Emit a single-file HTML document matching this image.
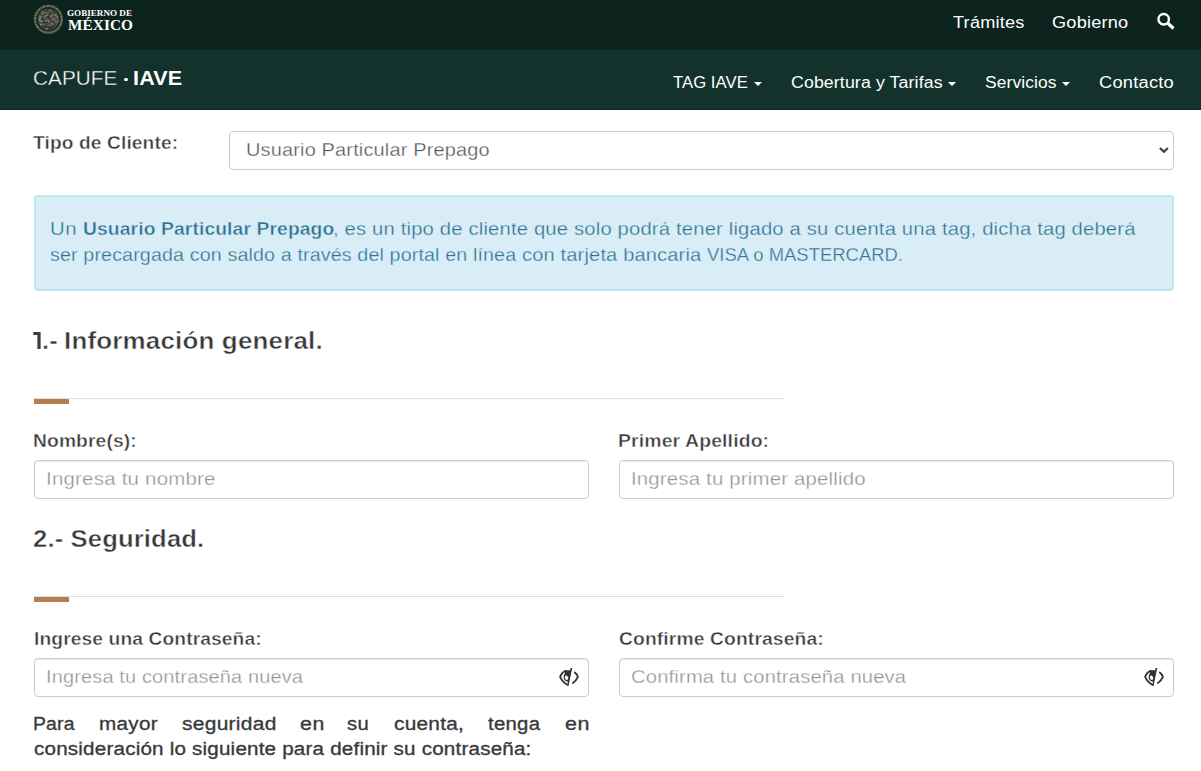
<!doctype html>
<html lang="es"><head><meta charset="utf-8"><title>CAPUFE IAVE</title>
<style>
html,body{margin:0;padding:0;}
body{width:1201px;height:771px;position:relative;overflow:hidden;background:#fff;font-family:"Liberation Sans",sans-serif;}
.t{position:absolute;white-space:nowrap;line-height:1;transform-origin:0 0;display:block;}
.t b{font-weight:700;}

.abs{position:absolute;display:block;}
#topbar{left:0;top:0;width:1201px;height:50px;background:#0c231e;}
#navbar{left:0;top:50px;width:1201px;height:59px;background:#13322b;border-bottom:1px solid #0a2721;}
.caret{width:0;height:0;border-left:4px solid transparent;border-right:4px solid transparent;border-top:4px solid #fff;}
.fc{box-sizing:border-box;height:39px;background:#fff;border:1px solid #ccc;border-radius:4px;box-shadow:inset 0 1px 1px rgba(0,0,0,.075);}
#alert{box-sizing:border-box;left:34px;top:195px;width:1140px;height:96px;background:#d9edf7;border:2px solid #bce8f1;border-radius:4px;}
.hr{left:34px;width:750px;height:1px;background:#dce0e0;}
.bar{left:34px;width:35px;height:5px;background:#b57e50;}
</style></head>
<body>
<div id="topbar" class="abs"></div>
<div id="navbar" class="abs"></div>
<!-- emblem -->
<svg class="abs" style="left:33px;top:4px" width="31" height="31" viewBox="-15.4 -15.3 31 31">
  <circle r="13.3" fill="none" stroke="#7f7865" stroke-width="2.4" stroke-dasharray="2.1 0.45 1.3 0.4 2.6 0.5 1.6 0.45" opacity=".92"/>
  <circle r="10.9" fill="#474d44"/>
  <rect x="-8.2" y="1.6" width="2.5" height="1.2" fill="#90876f" opacity="0.75"/>
  <rect x="-4.5" y="-2.9" width="1.8" height="1.4" fill="#90876f" opacity="0.87"/>
  <rect x="4.0" y="2.2" width="1.1" height="1.5" fill="#90876f" opacity="0.83"/>
  <rect x="8.1" y="1.8" width="2.5" height="1.4" fill="#90876f" opacity="0.80"/>
  <rect x="-0.2" y="0.6" width="1.8" height="0.9" fill="#90876f" opacity="0.63"/>
  <rect x="-0.8" y="1.1" width="1.7" height="1.2" fill="#90876f" opacity="0.89"/>
  <rect x="-8.7" y="-1.6" width="1.7" height="1.4" fill="#90876f" opacity="0.73"/>
  <rect x="-3.0" y="8.9" width="2.6" height="1.6" fill="#90876f" opacity="0.83"/>
  <rect x="-2.6" y="3.9" width="1.4" height="0.9" fill="#90876f" opacity="0.86"/>
  <rect x="-8.1" y="4.5" width="1.6" height="1.7" fill="#90876f" opacity="0.89"/>
  <rect x="3.3" y="-0.6" width="2.4" height="1.2" fill="#90876f" opacity="0.94"/>
  <rect x="-3.1" y="0.8" width="2.0" height="1.5" fill="#90876f" opacity="0.66"/>
  <rect x="3.6" y="2.2" width="2.5" height="1.5" fill="#90876f" opacity="0.60"/>
  <rect x="-0.4" y="2.4" width="1.0" height="1.5" fill="#90876f" opacity="0.62"/>
  <rect x="-6.7" y="-3.1" width="1.2" height="1.5" fill="#90876f" opacity="0.60"/>
  <rect x="-2.9" y="-3.1" width="1.6" height="1.0" fill="#90876f" opacity="0.66"/>
  <rect x="7.9" y="-2.4" width="1.4" height="1.6" fill="#90876f" opacity="0.63"/>
  <rect x="-8.1" y="5.1" width="2.0" height="0.9" fill="#90876f" opacity="0.95"/>
  <rect x="0.0" y="4.3" width="2.2" height="1.1" fill="#90876f" opacity="0.67"/>
  <rect x="1.7" y="0.8" width="1.9" height="1.0" fill="#90876f" opacity="0.79"/>
  <rect x="-5.8" y="4.1" width="2.5" height="1.2" fill="#90876f" opacity="0.78"/>
  <rect x="2.2" y="-3.9" width="1.2" height="1.6" fill="#90876f" opacity="0.88"/>
  <rect x="-1.1" y="3.4" width="2.2" height="1.6" fill="#90876f" opacity="0.63"/>
  <rect x="7.8" y="-3.4" width="1.9" height="1.2" fill="#90876f" opacity="0.59"/>
  <rect x="8.7" y="1.6" width="1.3" height="1.4" fill="#90876f" opacity="0.65"/>
  <rect x="2.7" y="-7.3" width="1.4" height="1.0" fill="#90876f" opacity="0.84"/>
  <rect x="3.3" y="1.2" width="1.9" height="1.6" fill="#90876f" opacity="0.80"/>
  <rect x="-2.4" y="8.8" width="1.2" height="0.8" fill="#90876f" opacity="0.66"/>
  <rect x="-2.9" y="0.2" width="1.2" height="1.1" fill="#90876f" opacity="0.78"/>
  <rect x="2.8" y="3.5" width="2.4" height="1.7" fill="#90876f" opacity="0.81"/>
  <rect x="-3.3" y="-7.4" width="1.1" height="0.8" fill="#90876f" opacity="0.56"/>
  <rect x="5.7" y="-4.8" width="2.5" height="0.8" fill="#90876f" opacity="0.80"/>
  <rect x="-9.0" y="0.1" width="1.4" height="1.7" fill="#90876f" opacity="0.58"/>
  <rect x="-9.3" y="-3.1" width="2.4" height="1.5" fill="#90876f" opacity="0.83"/>
  <rect x="1.8" y="-9.7" width="1.5" height="1.4" fill="#90876f" opacity="0.91"/>
  <rect x="3.2" y="-5.4" width="2.2" height="1.6" fill="#90876f" opacity="0.78"/>
  <rect x="-5.2" y="-5.0" width="1.9" height="1.3" fill="#90876f" opacity="0.58"/>
  <rect x="-7.5" y="-8.2" width="2.4" height="1.5" fill="#90876f" opacity="0.71"/>
  <rect x="-1.5" y="-8.2" width="1.6" height="1.6" fill="#90876f" opacity="0.58"/>
  <rect x="-1.0" y="-2.3" width="1.9" height="1.2" fill="#90876f" opacity="0.64"/>
  <rect x="-3.2" y="-7.4" width="1.9" height="1.6" fill="#90876f" opacity="0.65"/>
  <rect x="4.3" y="-0.1" width="2.1" height="1.0" fill="#90876f" opacity="0.62"/>
  <rect x="5.8" y="-5.2" width="1.7" height="1.6" fill="#90876f" opacity="0.68"/>
  <rect x="-3.0" y="-4.5" width="1.6" height="1.5" fill="#90876f" opacity="0.92"/>
  <rect x="3.5" y="-4.7" width="1.9" height="1.1" fill="#90876f" opacity="0.60"/>
  <rect x="-10.1" y="-0.5" width="2.3" height="1.4" fill="#90876f" opacity="0.93"/>
  <rect x="-1.5" y="3.4" width="1.7" height="1.0" fill="#90876f" opacity="0.64"/>
  <rect x="-7.5" y="3.4" width="1.7" height="1.1" fill="#90876f" opacity="0.89"/>
  <rect x="6.0" y="-1.2" width="1.0" height="0.8" fill="#90876f" opacity="0.90"/>
  <rect x="7.0" y="1.6" width="1.9" height="1.1" fill="#90876f" opacity="0.87"/>
  <rect x="2.7" y="0.0" width="1.7" height="0.8" fill="#90876f" opacity="0.88"/>
  <rect x="-0.2" y="3.0" width="1.0" height="1.4" fill="#90876f" opacity="0.73"/>
  <rect x="-6.6" y="-6.6" width="2.3" height="1.7" fill="#90876f" opacity="0.82"/>
  <rect x="1.5" y="6.0" width="1.2" height="0.8" fill="#90876f" opacity="0.74"/>
  <rect x="-1.6" y="-4.6" width="1.4" height="1.1" fill="#90876f" opacity="0.83"/>
  <rect x="-8.7" y="-1.6" width="2.2" height="1.2" fill="#90876f" opacity="0.87"/>
  <rect x="1.2" y="-2.3" width="2.5" height="1.5" fill="#90876f" opacity="0.60"/>
  <rect x="-8.6" y="1.7" width="2.4" height="1.1" fill="#90876f" opacity="0.78"/>
  <rect x="5.4" y="-6.5" width="1.9" height="1.0" fill="#1d302a" opacity="0.83"/>
  <rect x="1.4" y="7.5" width="1.8" height="1.1" fill="#1d302a" opacity="0.85"/>
  <rect x="1.1" y="8.4" width="2.0" height="1.3" fill="#1d302a" opacity="0.79"/>
  <rect x="0.5" y="-6.0" width="1.9" height="1.2" fill="#1d302a" opacity="0.72"/>
  <rect x="4.9" y="2.7" width="1.5" height="1.2" fill="#1d302a" opacity="0.77"/>
  <rect x="8.2" y="1.0" width="0.9" height="1.2" fill="#1d302a" opacity="0.66"/>
  <rect x="-4.9" y="7.1" width="1.0" height="0.8" fill="#1d302a" opacity="0.78"/>
  <rect x="-2.3" y="-9.5" width="1.6" height="1.3" fill="#1d302a" opacity="0.77"/>
  <rect x="2.2" y="-1.4" width="1.1" height="1.0" fill="#1d302a" opacity="0.70"/>
  <rect x="-1.8" y="-8.4" width="1.4" height="1.2" fill="#1d302a" opacity="0.80"/>
  <rect x="-3.2" y="5.0" width="1.8" height="1.2" fill="#1d302a" opacity="0.67"/>
  <rect x="5.0" y="-8.3" width="1.4" height="1.0" fill="#1d302a" opacity="0.67"/>
  <rect x="-7.5" y="-1.9" width="1.5" height="0.7" fill="#1d302a" opacity="0.94"/>
  <rect x="-7.1" y="-1.1" width="1.8" height="1.0" fill="#1d302a" opacity="0.77"/>
  <rect x="-1.6" y="-2.8" width="1.4" height="0.9" fill="#1d302a" opacity="0.93"/>
  <rect x="3.8" y="-2.7" width="1.4" height="0.8" fill="#1d302a" opacity="0.75"/>
  <rect x="3.0" y="-9.0" width="1.4" height="0.9" fill="#1d302a" opacity="0.67"/>
  <rect x="-7.4" y="-6.9" width="1.0" height="1.2" fill="#1d302a" opacity="0.61"/>
  <rect x="0.8" y="3.9" width="1.6" height="0.9" fill="#1d302a" opacity="0.72"/>
  <rect x="-3.2" y="-2.6" width="1.7" height="0.8" fill="#1d302a" opacity="0.78"/>
  <rect x="-0.7" y="3.9" width="1.4" height="1.0" fill="#1d302a" opacity="0.73"/>
  <rect x="-6.6" y="3.3" width="1.0" height="0.8" fill="#1d302a" opacity="0.82"/>
  <path d="M-0.8 -3.2 L5.6 3.8" stroke="#15271f" stroke-width="1.1"/>
  <path d="M-6.6 3.6 L0.2 3.6" stroke="#15271f" stroke-width="1"/>
  <path d="M-6.2 -3.2 L-2.4 -6.4 M2 -7 L5.5 -4.2 M-7.5 0.5 L-4.2 -1" stroke="#15271f" stroke-width=".8"/>
  <path d="M-6.8 6.4 Q0 10.4 6.8 6.4" fill="none" stroke="#15271f" stroke-width=".8"/>
  <circle r="11.3" fill="none" stroke="#13261f" stroke-width=".9"/>
</svg>
<!-- search -->
<svg class="abs" style="left:1155px;top:11px" width="22" height="20" viewBox="0 0 22 20">
  <circle cx="8.7" cy="8.2" r="5.25" fill="none" stroke="#fff" stroke-width="2.4"/>
  <path d="M12.6 12.0 L18.5 17.5" stroke="#fff" stroke-width="3.2" stroke-linecap="butt"/>
</svg>
<span class="abs" style="left:124.2px;top:77.9px;width:3.4px;height:3.4px;border-radius:50%;background:#fff"></span>
<span class="abs caret" style="left:753.9px;top:82px"></span>
<span class="abs caret" style="left:948.3px;top:82px"></span>
<span class="abs caret" style="left:1062.3px;top:82px"></span>
<!-- select -->
<div class="abs fc" style="left:229px;top:131px;width:945px;box-shadow:none"></div>
<svg class="abs" style="left:1158px;top:145px" width="13" height="10" viewBox="0 0 13 10">
  <path d="M1.9 2.9 L5.9 6.8 L9.9 2.9" fill="none" stroke="#36403e" stroke-width="2.1"/>
</svg>
<div id="alert" class="abs"></div>
<svg class="abs" style="left:32px;top:330px" width="12" height="21" viewBox="0 0 12 21"><path d="M1.3 2.1 L8.6 2.1 L8.6 19 L5.4 19 L5.4 4.9 L1.3 4.9 Z" fill="#3c3c3d"/></svg>
<div class="abs hr" style="top:398px"></div><div class="abs bar" style="top:399px"></div>
<div class="abs hr" style="top:596px"></div><div class="abs bar" style="top:597px"></div>
<div class="abs fc" style="left:34px;top:460px;width:555px"></div>
<div class="abs fc" style="left:619px;top:460px;width:555px"></div>
<div class="abs fc" style="left:34px;top:658px;width:555px"></div>
<div class="abs fc" style="left:619px;top:658px;width:555px"></div>
<!-- eye icons -->
<svg class="abs eye" style="left:558px;top:667px" width="23" height="20" viewBox="0 0 23 20">
  <path d="M8.3 3.7 C5.4 4.7 3.2 7 2.1 9.8 C3.6 13.2 6.2 16.2 9.8 18" fill="none" stroke="#333" stroke-width="1.8"/>
  <path d="M6.8 3.2 L12.3 3.2 L12.5 1 L14.3 1 L10.6 18.9 L9.2 18.7 L9.9 14.4 C7.6 14.7 5.7 12.8 5.6 10.2 C5.55 8.8 6 7.6 6.8 6.8 Z" fill="#333"/>
  <ellipse cx="8.5" cy="10.8" rx="1.55" ry="2.3" transform="rotate(-18 8.5 10.8)" fill="#fff"/>
  <path d="M15.3 0.6 L11.4 19.4" stroke="#fff" stroke-width="1.3"/>
  <path d="M16.3 5.1 C18 6.3 19.2 7.9 19.9 9.8 C18.8 12.4 16.8 14.9 14.3 16.5" fill="none" stroke="#333" stroke-width="1.8"/>
</svg>
<svg class="abs eye" style="left:1143px;top:667px" width="23" height="20" viewBox="0 0 23 20">
  <path d="M8.3 3.7 C5.4 4.7 3.2 7 2.1 9.8 C3.6 13.2 6.2 16.2 9.8 18" fill="none" stroke="#333" stroke-width="1.8"/>
  <path d="M6.8 3.2 L12.3 3.2 L12.5 1 L14.3 1 L10.6 18.9 L9.2 18.7 L9.9 14.4 C7.6 14.7 5.7 12.8 5.6 10.2 C5.55 8.8 6 7.6 6.8 6.8 Z" fill="#333"/>
  <ellipse cx="8.5" cy="10.8" rx="1.55" ry="2.3" transform="rotate(-18 8.5 10.8)" fill="#fff"/>
  <path d="M15.3 0.6 L11.4 19.4" stroke="#fff" stroke-width="1.3"/>
  <path d="M16.3 5.1 C18 6.3 19.2 7.9 19.9 9.8 C18.8 12.4 16.8 14.9 14.3 16.5" fill="none" stroke="#333" stroke-width="1.8"/>
</svg>


<span class="t" style="left:67.39px;top:8.00px;font-size:8.9px;font-weight:700;color:#ffffff;font-family:'Liberation Serif',serif;transform:translateY(0.50px) scaleX(1.0218);letter-spacing:0.023px;">GOBIERNO DE</span>
<span class="t" style="left:67.90px;top:17.00px;font-size:14.6px;font-weight:700;color:#ffffff;font-family:'Liberation Serif',serif;transform:translateY(0.50px) scaleX(1.0460);letter-spacing:0.095px;">M&Eacute;XICO</span>
<span class="t" style="left:952.73px;top:15.00px;font-size:16px;font-weight:400;color:#ffffff;font-family:'Liberation Sans',sans-serif;transform:translateY(0.00px) scaleX(1.1349);letter-spacing:0.181px;">Tr&aacute;mites</span>
<span class="t" style="left:1052.17px;top:15.00px;font-size:16px;font-weight:400;color:#ffffff;font-family:'Liberation Sans',sans-serif;transform:translateY(0.00px) scaleX(1.1341);letter-spacing:0.191px;">Gobierno</span>
<span class="t" style="left:33.27px;top:68.00px;font-size:20px;font-weight:400;color:#ffffff;font-family:'Liberation Sans',sans-serif;transform:translateY(0.00px) scaleX(1.0342);-webkit-text-stroke:0.35px #13322b;letter-spacing:0.093px;">CAPUFE</span>
<span class="t" style="left:132.99px;top:68.00px;font-size:20px;font-weight:700;color:#ffffff;font-family:'Liberation Sans',sans-serif;transform:translateY(0.00px) scaleX(1.0751);letter-spacing:0.177px;">IAVE</span>
<span class="t" style="left:673.08px;top:75.00px;font-size:16px;font-weight:400;color:#ffffff;font-family:'Liberation Sans',sans-serif;transform:translateY(0.00px) scaleX(1.0398);letter-spacing:0.068px;">TAG IAVE</span>
<span class="t" style="left:790.89px;top:75.00px;font-size:16px;font-weight:400;color:#ffffff;font-family:'Liberation Sans',sans-serif;transform:translateY(0.00px) scaleX(1.1051);letter-spacing:0.124px;">Cobertura y Tarifas</span>
<span class="t" style="left:985.11px;top:75.00px;font-size:16px;font-weight:400;color:#ffffff;font-family:'Liberation Sans',sans-serif;transform:translateY(0.00px) scaleX(1.0870);letter-spacing:0.112px;">Servicios</span>
<span class="t" style="left:1099.46px;top:75.00px;font-size:16px;font-weight:400;color:#ffffff;font-family:'Liberation Sans',sans-serif;transform:translateY(0.00px) scaleX(1.1428);letter-spacing:0.197px;">Contacto</span>
<span class="t" style="left:33.30px;top:134.00px;font-size:18px;font-weight:700;color:#39393a;font-family:'Liberation Sans',sans-serif;transform:translateY(0.00px) scaleX(1.0658);-webkit-text-stroke:0.4px #ffffff;letter-spacing:0.097px;">Tipo de Cliente:</span>
<span class="t" style="left:245.54px;top:141.00px;font-size:18px;font-weight:400;color:#555555;font-family:'Liberation Sans',sans-serif;transform:translateY(0.00px) scaleX(1.1084);-webkit-text-stroke:0.3px #ffffff;letter-spacing:0.148px;">Usuario Particular Prepago</span>
<span class="t" style="left:50.31px;top:220.00px;font-size:18px;font-weight:400;color:#31708f;font-family:'Liberation Sans',sans-serif;transform:translateY(0.00px) scaleX(1.1285);-webkit-text-stroke:0.3px #d9edf7;letter-spacing:0.412px;">Un</span>
<span class="t" style="left:82.93px;top:220.00px;font-size:18px;font-weight:700;color:#31708f;font-family:'Liberation Sans',sans-serif;transform:translateY(0.00px) scaleX(1.0704);-webkit-text-stroke:0.4px #d9edf7;letter-spacing:0.107px;">Usuario Particular Prepago</span>
<span class="t" style="left:333.31px;top:220.00px;font-size:18px;font-weight:400;color:#31708f;font-family:'Liberation Sans',sans-serif;transform:translateY(0.00px) scaleX(1.1238);-webkit-text-stroke:0.3px #d9edf7;letter-spacing:0.154px;">, es un tipo de cliente que solo podr&aacute; tener ligado a su cuenta una tag, dicha tag deber&aacute;</span>
<span class="t" style="left:50.45px;top:246.00px;font-size:18px;font-weight:400;color:#31708f;font-family:'Liberation Sans',sans-serif;transform:translateY(0.00px) scaleX(1.0927);-webkit-text-stroke:0.3px #d9edf7;letter-spacing:0.121px;">ser precargada con saldo a trav&eacute;s del portal en l&iacute;nea</span>
<span class="t" style="left:521.89px;top:246.00px;font-size:18px;font-weight:400;color:#31708f;font-family:'Liberation Sans',sans-serif;transform:translateY(0.00px) scaleX(1.1137);-webkit-text-stroke:0.3px #d9edf7;letter-spacing:0.149px;">con tarjeta bancaria</span>
<span class="t" style="left:706.80px;top:246.00px;font-size:18px;font-weight:400;color:#31708f;font-family:'Liberation Sans',sans-serif;transform:translateY(0.00px) scaleX(1.0220);-webkit-text-stroke:0.3px #d9edf7;letter-spacing:0.042px;">VISA o MASTERCARD.</span>
<span class="t" style="left:42.20px;top:329.00px;font-size:24px;font-weight:700;color:#39393a;font-family:'Liberation Sans',sans-serif;transform:translateY(0.00px) scaleX(1.0638);-webkit-text-stroke:0.45px #ffffff;letter-spacing:0.127px;">.-</span>
<span class="t" style="left:64.38px;top:329.00px;font-size:24px;font-weight:700;color:#39393a;font-family:'Liberation Sans',sans-serif;transform:translateY(0.00px) scaleX(1.0814);-webkit-text-stroke:0.45px #ffffff;letter-spacing:0.163px;">Informaci&oacute;n general.</span>
<span class="t" style="left:33.43px;top:432.00px;font-size:18px;font-weight:700;color:#39393a;font-family:'Liberation Sans',sans-serif;transform:translateY(0.00px) scaleX(1.0682);-webkit-text-stroke:0.4px #ffffff;letter-spacing:0.117px;">Nombre(s):</span>
<span class="t" style="left:618.42px;top:432.00px;font-size:18px;font-weight:700;color:#39393a;font-family:'Liberation Sans',sans-serif;transform:translateY(0.00px) scaleX(1.0784);-webkit-text-stroke:0.4px #ffffff;letter-spacing:0.116px;">Primer Apellido:</span>
<span class="t" style="left:46.20px;top:470.00px;font-size:18px;font-weight:400;color:#929292;font-family:'Liberation Sans',sans-serif;transform:translateY(0.00px) scaleX(1.1364);-webkit-text-stroke:0.3px #ffffff;letter-spacing:0.191px;">Ingresa tu nombre</span>
<span class="t" style="left:631.20px;top:470.00px;font-size:18px;font-weight:400;color:#929292;font-family:'Liberation Sans',sans-serif;transform:translateY(0.00px) scaleX(1.1315);-webkit-text-stroke:0.3px #ffffff;letter-spacing:0.165px;">Ingresa tu primer apellido</span>
<span class="t" style="left:33.13px;top:527.00px;font-size:24px;font-weight:700;color:#39393a;font-family:'Liberation Sans',sans-serif;transform:translateY(0.00px) scaleX(1.0670);-webkit-text-stroke:0.45px #ffffff;letter-spacing:0.133px;">2.- Seguridad.</span>
<span class="t" style="left:33.53px;top:630.00px;font-size:18px;font-weight:700;color:#39393a;font-family:'Liberation Sans',sans-serif;transform:translateY(0.00px) scaleX(1.0669);-webkit-text-stroke:0.4px #ffffff;letter-spacing:0.105px;">Ingrese una Contrase&ntilde;a:</span>
<span class="t" style="left:618.96px;top:630.00px;font-size:18px;font-weight:700;color:#39393a;font-family:'Liberation Sans',sans-serif;transform:translateY(0.00px) scaleX(1.0705);-webkit-text-stroke:0.4px #ffffff;letter-spacing:0.114px;">Confirme Contrase&ntilde;a:</span>
<span class="t" style="left:46.24px;top:668.00px;font-size:18px;font-weight:400;color:#929292;font-family:'Liberation Sans',sans-serif;transform:translateY(0.00px) scaleX(1.1073);-webkit-text-stroke:0.3px #ffffff;letter-spacing:0.149px;">Ingresa tu contrase&ntilde;a nueva</span>
<span class="t" style="left:631.08px;top:668.00px;font-size:18px;font-weight:400;color:#929292;font-family:'Liberation Sans',sans-serif;transform:translateY(0.00px) scaleX(1.1197);-webkit-text-stroke:0.3px #ffffff;letter-spacing:0.168px;">Confirma tu contrase&ntilde;a nueva</span>
<span class="t" style="left:32.59px;top:715.00px;font-size:18px;font-weight:400;color:#39393a;font-family:'Liberation Sans',sans-serif;transform:translateY(0.00px) scaleX(1.0758);-webkit-text-stroke:0.32px #39393a;letter-spacing:0.153px;">Para</span>
<span class="t" style="left:99.35px;top:715.00px;font-size:18px;font-weight:400;color:#39393a;font-family:'Liberation Sans',sans-serif;transform:translateY(0.00px) scaleX(1.1474);-webkit-text-stroke:0.32px #39393a;letter-spacing:0.278px;">mayor</span>
<span class="t" style="left:182.42px;top:715.00px;font-size:18px;font-weight:400;color:#39393a;font-family:'Liberation Sans',sans-serif;transform:translateY(0.00px) scaleX(1.1645);-webkit-text-stroke:0.32px #39393a;letter-spacing:0.242px;">seguridad</span>
<span class="t" style="left:299.91px;top:715.00px;font-size:18px;font-weight:400;color:#39393a;font-family:'Liberation Sans',sans-serif;transform:translateY(0.00px) scaleX(1.1838);-webkit-text-stroke:0.32px #39393a;letter-spacing:0.507px;">en</span>
<span class="t" style="left:347.44px;top:715.00px;font-size:18px;font-weight:400;color:#39393a;font-family:'Liberation Sans',sans-serif;transform:translateY(0.00px) scaleX(1.1214);-webkit-text-stroke:0.32px #39393a;letter-spacing:0.334px;">su</span>
<span class="t" style="left:393.92px;top:715.00px;font-size:18px;font-weight:400;color:#39393a;font-family:'Liberation Sans',sans-serif;transform:translateY(0.00px) scaleX(1.1566);-webkit-text-stroke:0.32px #39393a;letter-spacing:0.227px;">cuenta,</span>
<span class="t" style="left:487.50px;top:715.00px;font-size:18px;font-weight:400;color:#39393a;font-family:'Liberation Sans',sans-serif;transform:translateY(0.00px) scaleX(1.1308);-webkit-text-stroke:0.32px #39393a;letter-spacing:0.232px;">tenga</span>
<span class="t" style="left:564.90px;top:715.00px;font-size:18px;font-weight:400;color:#39393a;font-family:'Liberation Sans',sans-serif;transform:translateY(0.00px) scaleX(1.1930);-webkit-text-stroke:0.32px #39393a;letter-spacing:0.528px;">en</span>
<span class="t" style="left:33.63px;top:740.00px;font-size:18px;font-weight:400;color:#39393a;font-family:'Liberation Sans',sans-serif;transform:translateY(0.00px) scaleX(1.1441);-webkit-text-stroke:0.32px #39393a;letter-spacing:0.178px;">consideraci&oacute;n lo siguiente para definir su contrase&ntilde;a:</span>
</body></html>
